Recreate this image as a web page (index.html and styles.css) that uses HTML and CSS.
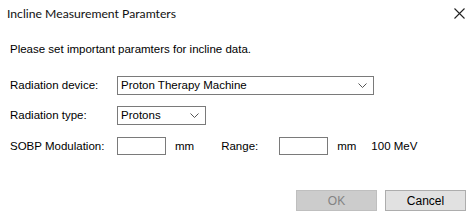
FILE: index.html
```html
<!DOCTYPE html>
<html lang="en">
<head>
    <meta charset="UTF-8">
    <title>Incline Measurement Paramters</title>
    <link rel="stylesheet" href="styles.css">
</head>
<body>
    <div class="dialog">
        <div class="titlebar">
            <span class="title">Incline Measurement Paramters</span>
            <span class="close-button">
                <svg width="11" height="11" viewBox="0 0 11 11">
                    <path d="M0.5 0.5 L10.5 10.5 M10.5 0.5 L0.5 10.5" stroke="#222" stroke-width="1.1" fill="none"/>
                </svg>
            </span>
        </div>

        <div class="content">
            <p class="intro">Please set important paramters for incline data.</p>

            <div class="form-row first">
                <span class="label">Radiation device:</span>
                <div class="combo combo-wide">
                    <span>Proton Therapy Machine</span>
                    <svg class="chevron" width="9" height="5" viewBox="0 0 9 5">
                        <path d="M0.5 0.5 L4.5 4.5 L8.5 0.5" stroke="#555" fill="none"/>
                    </svg>
                </div>
            </div>

            <div class="form-row">
                <span class="label">Radiation type:</span>
                <div class="combo combo-small">
                    <span>Protons</span>
                    <svg class="chevron" width="9" height="5" viewBox="0 0 9 5">
                        <path d="M0.5 0.5 L4.5 4.5 L8.5 0.5" stroke="#555" fill="none"/>
                    </svg>
                </div>
            </div>

            <div class="form-row">
                <span class="label">SOBP Modulation:</span>
                <input class="num-input" type="text">
                <span class="unit">mm</span>
                <span class="range-label">Range:</span>
                <input class="num-input" type="text">
                <span class="unit">mm</span>
                <span class="energy">100 MeV</span>
            </div>
        </div>

        <div class="buttons">
            <button class="btn btn-disabled">OK</button>
            <button class="btn">Cancel</button>
        </div>
    </div>
</body>
</html>
```

FILE: styles.css
```css
* {
    margin: 0;
    padding: 0;
    box-sizing: border-box;
}

body {
    background-color: #ffffff;
    font-family: 'Liberation Sans', Arial, sans-serif;
    font-size: 11.5px;
    color: #000;
}

.dialog {
    width: 474px;
    height: 218px;
}

.titlebar {
    height: 27px;
    display: flex;
    align-items: center;
    justify-content: space-between;
    padding-left: 7px;
}

.title {
    font-family: 'Lato', sans-serif;
    font-size: 12.2px;
    color: #111;
}

.close-button {
    width: 46px;
    height: 27px;
    display: flex;
    align-items: center;
    justify-content: center;
    margin-right: -8px;
}

.content {
    padding: 0 10px;
}

.intro {
    margin-top: 15px;
    line-height: 14px;
}

.form-row {
    display: flex;
    align-items: center;
    height: 20px;
    margin-top: 10px;
}

.form-row.first {
    margin-top: 19px;
}

.form-row:last-child {
    margin-top: 11px;
}

.label {
    width: 107px;
}

.combo {
    height: 19px;
    border: 1px solid #7a7a7a;
    background-color: #fff;
    display: flex;
    align-items: center;
    justify-content: space-between;
    padding: 0 6px 0 3px;
}

.combo-wide {
    width: 257px;
}

.combo-small {
    width: 89px;
}

.chevron {
    display: block;
}

.num-input {
    width: 49px;
    height: 18px;
    border: 1px solid #7a7a7a;
    background-color: #fff;
    outline: none;
}

.unit {
    margin-left: 9px;
}

.range-label {
    margin-left: 27px;
    width: 58px;
}

.energy {
    margin-left: 15px;
}

.buttons {
    display: flex;
    justify-content: flex-end;
    gap: 8px;
    padding-right: 8px;
    margin-top: 34px;
}

.btn {
    width: 81px;
    height: 21px;
    font-family: 'Liberation Sans', Arial, sans-serif;
    font-size: 12px;
    color: #000;
    background-color: #e1e1e1;
    border: 1px solid #adadad;
}

.btn-disabled {
    background-color: #cccccc;
    border-color: #bfbfbf;
    color: #838383;
}
```
